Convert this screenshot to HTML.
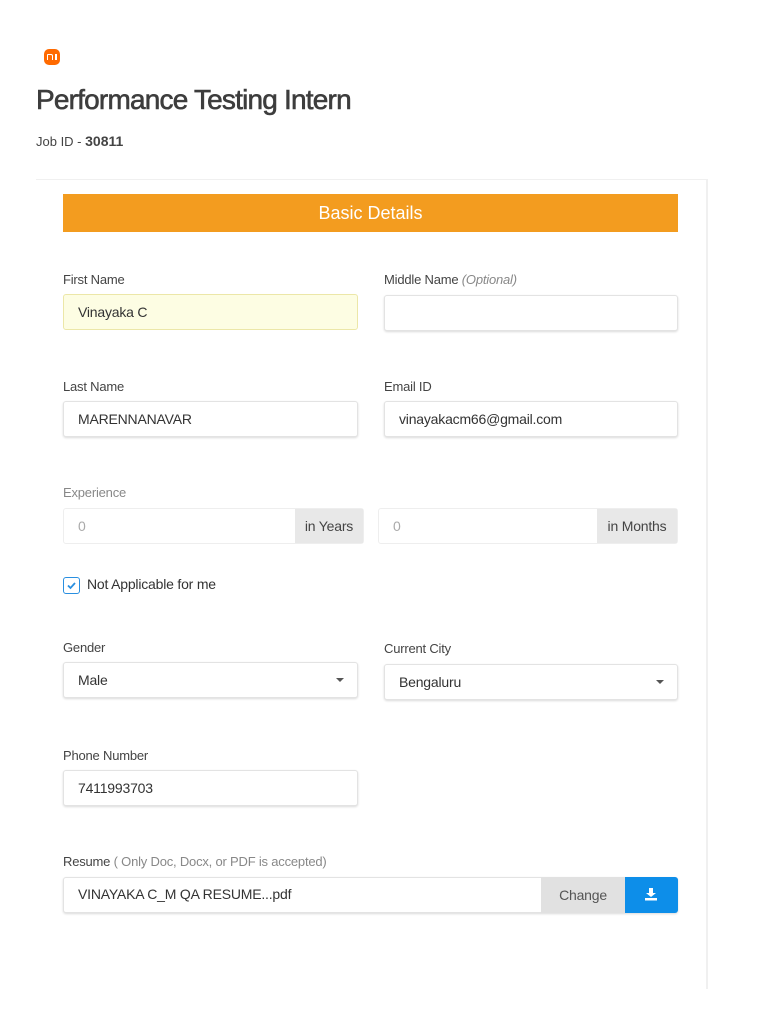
<!DOCTYPE html>
<html><head><meta charset="utf-8"><style>
*{box-sizing:border-box;margin:0;padding:0}
body{width:768px;height:1024px;background:#fff;font-family:"Liberation Sans",sans-serif;color:#333;position:relative;overflow:hidden}
.a{position:absolute}
.lbl{position:absolute;font-size:13px;color:#444;letter-spacing:-0.2px}
.inp{position:absolute;height:36px;border:1px solid #e3e3e3;border-radius:3px;box-shadow:0 1px 2px rgba(0,0,0,.15);background:#fff;font-size:14px;color:#333;padding-left:14px;line-height:34px;letter-spacing:-0.2px}
.arr{position:absolute;right:13px;top:15px;width:0;height:0;border-left:4px solid transparent;border-right:4px solid transparent;border-top:4px solid #555}
.addon{position:absolute;top:0;right:0;height:100%;background:#e8e8e8;color:#444;font-size:14px;text-align:center;line-height:34px}
</style></head><body>
<div class="a" style="left:44px;top:49px;width:16px;height:16px;background:#ff6a00;border-radius:5px;"></div>
<div class="a" style="left:47px;top:54px;width:6px;height:6px;border:1.5px solid #fff;border-bottom:none;border-radius:1px 2px 0 0"></div>
<div class="a" style="left:55px;top:54px;width:1.5px;height:6px;background:#fff"></div>
<div class="a" style="left:36px;top:84px;font-size:28px;color:#3d3d3d;letter-spacing:-0.8px;-webkit-text-stroke:0.6px #3d3d3d">Performance Testing Intern</div>
<div class="a" style="left:36px;top:133px;font-size:13px;color:#444">Job ID - <b style="font-size:14px">30811</b></div>
<div class="a" style="left:36px;top:179px;width:672px;height:810px;border-top:1px solid #f0f0f0;border-right:2px solid #f0f0f0"></div>
<div class="a" style="left:63px;top:194px;width:615px;height:38px;background:#f39c1f;color:#fff;font-size:18px;text-align:center;line-height:38px">Basic Details</div>

<div class="lbl" style="left:63px;top:272px">First Name</div>
<div class="inp" style="left:63px;top:294px;width:295px;background:#fdfde3;border-color:#ece7a8;box-shadow:none">Vinayaka C</div>
<div class="lbl" style="left:384px;top:272px">Middle Name <i style="color:#888">(Optional)</i></div>
<div class="inp" style="left:384px;top:295px;width:294px"></div>

<div class="lbl" style="left:63px;top:379px">Last Name</div>
<div class="inp" style="left:63px;top:401px;width:295px">MARENNANAVAR</div>
<div class="lbl" style="left:384px;top:379px">Email ID</div>
<div class="inp" style="left:384px;top:401px;width:294px">vinayakacm66@gmail.com</div>

<div class="lbl" style="left:63px;top:485px;color:#888">Experience</div>
<div class="inp" style="left:63px;top:508px;width:301px;color:#aaa;box-shadow:none;border-color:#eee">0<div class="addon" style="width:68px">in Years</div></div>
<div class="inp" style="left:378px;top:508px;width:300px;color:#aaa;box-shadow:none;border-color:#eee">0<div class="addon" style="width:80px">in Months</div></div>

<div class="a" style="left:63px;top:577px;width:17px;height:17px;border:1.5px solid #2a8fe0;border-radius:3px"></div>
<svg class="a" style="left:66px;top:580px" width="11" height="11" viewBox="0 0 11 11"><path d="M2 5.5L4.5 8L9 3" stroke="#2a8fe0" stroke-width="1.8" fill="none"/></svg>
<div class="a" style="left:87px;top:576px;font-size:14px;color:#333;letter-spacing:-0.2px">Not Applicable for me</div>

<div class="lbl" style="left:63px;top:640px">Gender</div>
<div class="inp" style="left:63px;top:662px;width:295px">Male<div class="arr"></div></div>
<div class="lbl" style="left:384px;top:641px">Current City</div>
<div class="inp" style="left:384px;top:664px;width:294px">Bengaluru<div class="arr"></div></div>

<div class="lbl" style="left:63px;top:748px">Phone Number</div>
<div class="inp" style="left:63px;top:770px;width:295px">7411993703</div>

<div class="lbl" style="left:63px;top:854px">Resume <span style="color:#888">( Only Doc, Docx, or PDF is accepted)</span></div>
<div class="inp" style="left:63px;top:877px;width:615px;padding-left:14px;line-height:32px">VINAYAKA C_M QA RESUME...pdf
<div class="a" style="right:52px;top:-1px;width:84px;height:36px;background:#e1e1e1;color:#555;text-align:center;line-height:36px">Change</div>
<div class="a" style="right:-1px;top:-1px;width:53px;height:36px;background:#0d8ee9;border-radius:0 3px 3px 0">
<svg style="position:absolute;left:19px;top:10px" width="14" height="14" viewBox="0 0 14 14"><path d="M5 1h4v5h3L7 10 2 6h3z" fill="#fff"/><rect x="1" y="11" width="12" height="2.5" fill="#fff"/></svg></div>
</div>
</body></html>
